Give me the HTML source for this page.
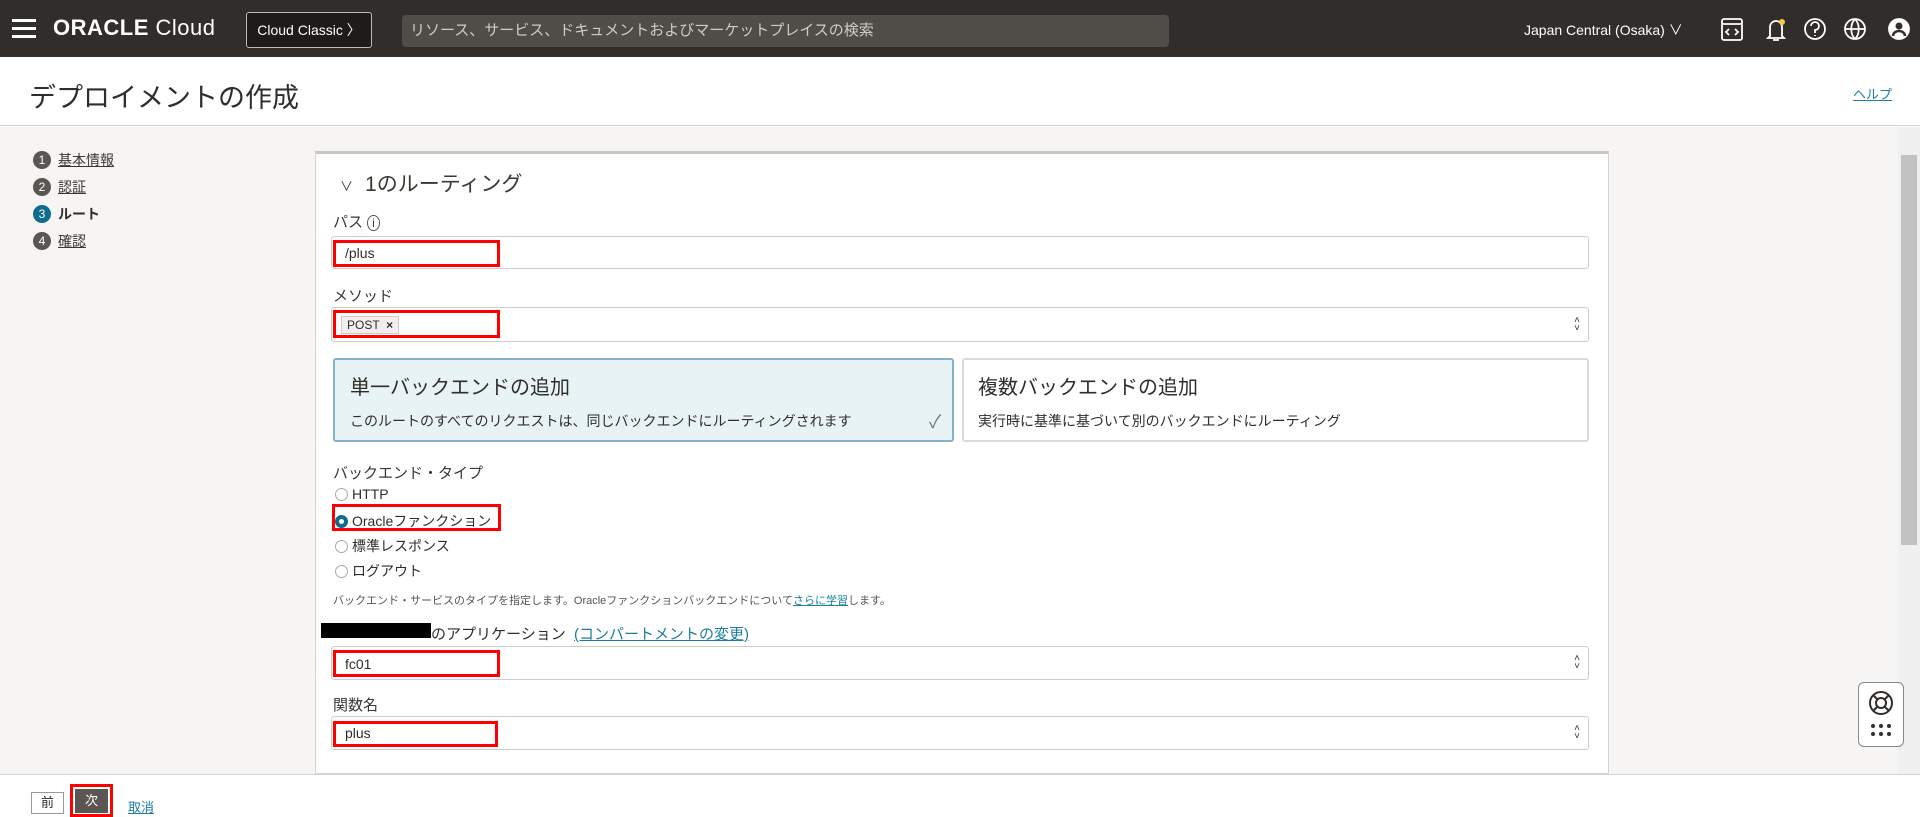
<!DOCTYPE html>
<html><head><meta charset="utf-8"><style>
*{box-sizing:border-box;margin:0;padding:0}
body{width:1920px;height:817px;overflow:hidden;background:#fbfbfa;font-family:"Liberation Sans","Noto Sans CJK JP",sans-serif;color:#312d2a;position:relative}
.a{position:absolute}
.nav{left:0;top:0;width:1920px;height:57px;background:#312d2a}
.inp{position:absolute;left:331px;width:1258px;background:#fff;border:1px solid #cfcdca;border-radius:3px}
.red{position:absolute;border:3px solid #f00}
.lbl{position:absolute;left:333px;font-size:15px;color:#3b3733}
.arr{position:absolute;right:8px;top:50%;transform:translateY(-50%);font-size:10px;line-height:8px;color:#333;text-align:center}
.rad{position:absolute;left:335px;font-size:14px;display:flex;align-items:center;gap:4px}
.rad i{display:inline-block;width:13px;height:13px;border:1px solid #aaa;border-radius:50%;background:#fff}
.step{position:absolute;left:33px;font-size:14px;display:flex;align-items:center;gap:7px}
.step i{display:inline-flex;width:18px;height:18px;border-radius:50%;background:#5b5651;color:#fff;font-style:normal;font-size:12px;justify-content:center;align-items:center}
.step u{color:#3b3733}
</style></head><body>
<div class="a nav"></div>
<div class="a" style="left:12px;top:19px;width:24px;height:3px;background:#fff;box-shadow:0 8px 0 #fff,0 16px 0 #fff"></div>
<div class="a" style="left:53px;top:15px;color:#fff;font-size:22px;letter-spacing:0.5px"><b style="font-weight:bold">ORACLE</b> Cloud</div>
<div class="a" style="left:246px;top:12px;width:126px;height:36px;border:1px solid #bbb;border-radius:3px;background:#1e1b19;color:#fff;font-size:14px;line-height:34px;text-align:center">Cloud Classic 〉</div>
<div class="a" style="left:402px;top:15px;width:767px;height:32px;background:#504c47;border-radius:4px;color:#cfcbc6;font-size:15px;line-height:32px;padding-left:8px">リソース、サービス、ドキュメントおよびマーケットプレイスの検索</div>
<div class="a" style="left:1524px;top:20px;color:#fff;font-size:14px">Japan Central (Osaka) ∨</div>
<svg class="a" style="left:1718px;top:14px" width="200" height="30" fill="none" stroke="#fff" stroke-width="1.8">
<rect x="4" y="5" width="20" height="21" rx="2"/><path d="M4 10h20M11 15l-3 3 3 3M17 15l3 3-3 3"/>
<path d="M52 22V13a6 6 0 0 1 12 0v9l2 2H50zM55 26h6"/><circle cx="64" cy="8" r="3" fill="#f5c84c" stroke="none"/>
<circle cx="97" cy="15" r="10"/><path d="M93 12a4 4 0 1 1 4 4v3M97 21v1"/>
<circle cx="137" cy="15" r="10"/><path d="M127 15h20M137 5c-5 5-5 15 0 20M137 5c5 5 5 15 0 20"/>
<circle cx="181" cy="15" r="10" fill="#fff"/><circle cx="181" cy="12" r="3.5" fill="#312d2a" stroke="none"/><path d="M175 22a6 5 0 0 1 12 0" stroke="#312d2a" stroke-width="2.5"/>
</svg>
<div class="a" style="left:0;top:57px;width:1920px;height:69px;background:#fff;border-bottom:1px solid #d6d4d1"></div>
<div class="a" style="left:29px;top:76px;font-size:27px;color:#312d2a">デプロイメントの作成</div>
<div class="a" style="left:1853px;top:84px;font-size:13px;color:#1a7fa3;text-decoration:underline">ヘルプ</div>
<div class="a" style="left:0;top:127px;width:1898px;height:647px;background:#f6f5f3"></div>
<div class="a" style="left:1898px;top:127px;width:22px;height:647px;background:#f0f0f0"></div>
<div class="a" style="left:1901px;top:155px;width:16px;height:390px;background:#c2c2c2"></div>
<div class="step" style="top:150px"><i>1</i><u>基本情報</u></div>
<div class="step" style="top:177px"><i>2</i><u>認証</u></div>
<div class="step" style="top:204px"><i style="background:#0f6c8f">3</i><b>ルート</b></div>
<div class="step" style="top:231px"><i>4</i><u>確認</u></div>
<div class="a" style="left:315px;top:151px;width:1294px;height:623px;background:#fff;border:1px solid #d6d4d1;border-top:3px solid #c9c7c4"></div>
<div class="a" style="left:340px;top:168px;font-size:21px;color:#3b3733"><span style="font-size:13px;margin-right:12px">∨</span>1のルーティング</div>
<div class="lbl" style="top:211px">パス <span style="font-size:12px;border:1px solid #555;border-radius:50%;padding:0 4px">i</span></div>
<div class="inp" style="top:236px;height:33px"></div>
<div class="a" style="left:345px;top:245px;font-size:14px">/plus</div>
<div class="lbl" style="top:285px">メソッド</div>
<div class="inp" style="top:307px;height:35px"><div class="arr">˄<br>˅</div></div>
<div class="a" style="left:341px;top:316px;font-size:12px;background:#f1efed;border:1px solid #ccc;padding:1px 5px">POST &nbsp;<b>×</b></div>
<div class="a" style="left:333px;top:358px;width:621px;height:84px;background:#e8f3f6;border:2px solid #7fb3c8;border-radius:3px"></div>
<div class="a" style="left:350px;top:371px;font-size:20px">単一バックエンドの追加</div>
<div class="a" style="left:350px;top:411px;font-size:14px">このルートのすべてのリクエストは、同じバックエンドにルーティングされます</div>
<div class="a" style="left:929px;top:408px;font-size:18px;color:#777">✓</div>
<div class="a" style="left:962px;top:358px;width:627px;height:84px;background:#fff;border:2px solid #dcdad7;border-radius:3px"></div>
<div class="a" style="left:978px;top:371px;font-size:20px">複数バックエンドの追加</div>
<div class="a" style="left:978px;top:411px;font-size:14px">実行時に基準に基づいて別のバックエンドにルーティング</div>
<div class="lbl" style="top:462px;font-size:15px">バックエンド・タイプ</div>
<div class="rad" style="top:486px"><i></i>HTTP</div>
<div class="rad" style="top:511px"><i style="border:4px solid #0f6c8f"></i>Oracleファンクション</div>
<div class="rad" style="top:536px"><i></i>標準レスポンス</div>
<div class="rad" style="top:561px"><i></i>ログアウト</div>
<div class="a" style="left:333px;top:592px;font-size:11px;color:#555">バックエンド・サービスのタイプを指定します。Oracleファンクションバックエンドについて<u style="color:#1a7fa3">さらに学習</u>します。</div>
<div class="a" style="left:321px;top:623px;width:110px;height:15px;background:#000"></div>
<div class="a" style="left:431px;top:623px;font-size:15px">のアプリケーション &nbsp;<u style="color:#1a7fa3">(コンパートメントの変更)</u></div>
<div class="inp" style="top:646px;height:34px"><div class="arr">˄<br>˅</div></div>
<div class="a" style="left:345px;top:656px;font-size:14px">fc01</div>
<div class="lbl" style="top:694px">関数名</div>
<div class="inp" style="top:716px;height:34px"><div class="arr">˄<br>˅</div></div>
<div class="a" style="left:345px;top:725px;font-size:14px">plus</div>
<div class="red" style="left:333px;top:240px;width:167px;height:27px"></div>
<div class="red" style="left:333px;top:310px;width:167px;height:28px"></div>
<div class="red" style="left:332px;top:504px;width:169px;height:27px"></div>
<div class="red" style="left:333px;top:650px;width:167px;height:27px"></div>
<div class="red" style="left:333px;top:721px;width:165px;height:26px"></div>
<div class="a" style="left:1858px;top:682px;width:46px;height:65px;background:#fff;border:1px solid #888;border-radius:6px"></div>
<svg class="a" style="left:1866px;top:690px" width="30" height="50" fill="none" stroke="#312d2a" stroke-width="2"><circle cx="15" cy="13" r="11"/><circle cx="15" cy="13" r="5"/><path d="M7 5l4 4M23 5l-4 4M7 21l4-4M23 21l-4-4"/><g fill="#312d2a" stroke="none"><circle cx="7" cy="36" r="2"/><circle cx="15" cy="36" r="2"/><circle cx="23" cy="36" r="2"/><circle cx="7" cy="44" r="2"/><circle cx="15" cy="44" r="2"/><circle cx="23" cy="44" r="2"/></g></svg>
<div class="a" style="left:0;top:774px;width:1920px;height:43px;background:#fff;border-top:1px solid #d6d4d1"></div>
<div class="a" style="left:31px;top:792px;width:33px;height:22px;border:1px solid #999;background:#fff;font-size:13px;text-align:center;line-height:20px">前</div>
<div class="a" style="left:70px;top:784px;width:43px;height:33px;border:3px solid #f00"></div>
<div class="a" style="left:75px;top:789px;width:33px;height:24px;background:#5b5651;color:#fff;font-size:13px;text-align:center;line-height:24px">次</div>
<div class="a" style="left:128px;top:797px;font-size:13px;color:#1a7fa3;text-decoration:underline">取消</div>
</body></html>
